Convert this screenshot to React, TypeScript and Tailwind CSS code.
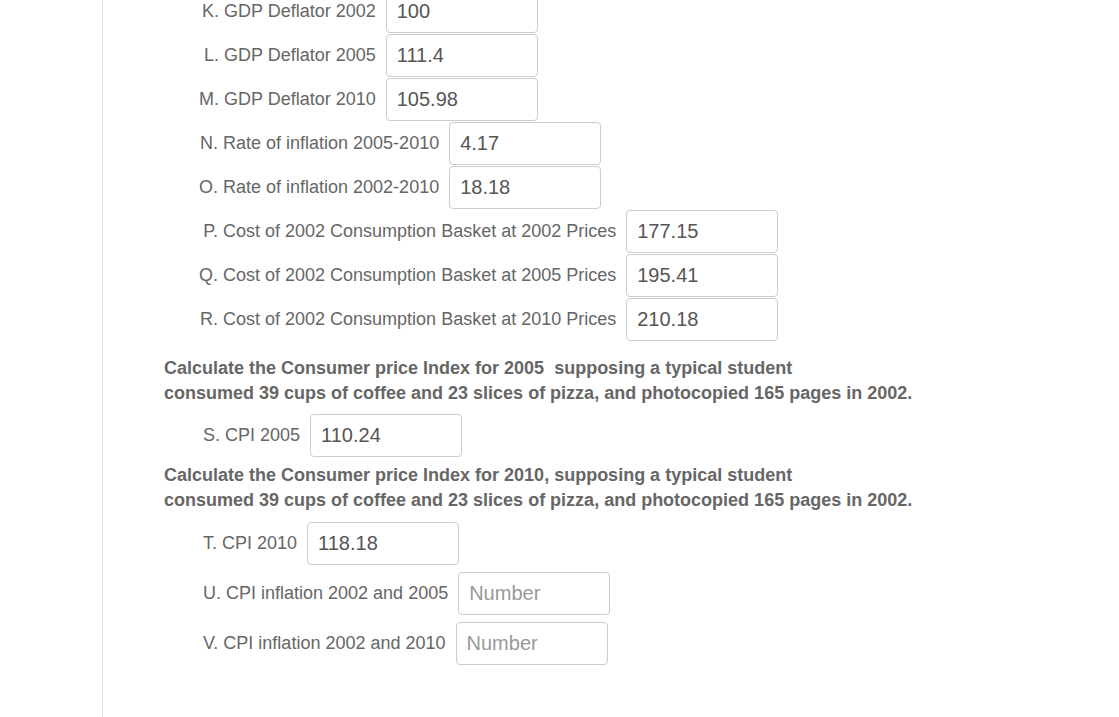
const Field = ({ value }: { value?: string }) => (
  <input
    type="text"
    readOnly
    value={value ?? ""}
    placeholder="Number"
    className="w-[152px] h-[43px] px-[10px] border border-[#ccc] rounded-[4px] bg-white text-[20px] text-[#555] placeholder:text-[#999] outline-none font-['Liberation_Sans',Arial,sans-serif]"
  />
);

type Row = { label: string; value?: string };

// rows that share a label column (labels right-aligned against their inputs)
const Group = ({ rows }: { rows: Row[] }) => (
  <div className="grid grid-cols-[auto_auto] justify-start items-center gap-x-[10px] gap-y-[1px] pl-[35px]">
    {rows.map((r) => [
      <label key={r.label + "l"} className="justify-self-end text-[#666]">{r.label}</label>,
      <Field key={r.label + "f"} value={r.value} />,
    ])}
  </div>
);

const Single = ({ label, value, className }: Row & { className?: string }) => (
  <div className={"flex items-center gap-[10px] pl-[39px] " + (className ?? "")}>
    <label className="text-[#666]">{label}</label>
    <Field value={value} />
  </div>
);

const App: React.FC = () => {
  return (
    <div className="w-[1119px] h-[717px] overflow-hidden bg-white font-['Liberation_Sans',Arial,sans-serif] text-[18px] leading-[25px]">
      <div className="ml-[102px] h-[760px] border-l border-[#ddd]">
        <div className="pl-[61px] -mt-[10px]">
          <div className="flex flex-col gap-y-[1px]">
            <Group
              rows={[
                { label: "K. GDP Deflator 2002", value: "100" },
                { label: "L. GDP Deflator 2005", value: "111.4" },
                { label: "M. GDP Deflator 2010", value: "105.98" },
              ]}
            />
            <Group
              rows={[
                { label: "N. Rate of inflation 2005-2010", value: "4.17" },
                { label: "O. Rate of inflation 2002-2010", value: "18.18" },
              ]}
            />
            <Group
              rows={[
                { label: "P. Cost of 2002 Consumption Basket at 2002 Prices", value: "177.15" },
                { label: "Q. Cost of 2002 Consumption Basket at 2005 Prices", value: "195.41" },
                { label: "R. Cost of 2002 Consumption Basket at 2010 Prices", value: "210.18" },
              ]}
            />
          </div>

          <p className="mt-[15px] font-bold text-[#666]">
            Calculate the Consumer price Index for 2005&nbsp; supposing a typical student
            <br />
            consumed 39 cups of coffee and 23 slices of pizza, and photocopied 165 pages in 2002.
          </p>
          <Single className="mt-[8px]" label="S. CPI 2005" value="110.24" />

          <p className="mt-[6px] font-bold text-[#666]">
            Calculate the Consumer price Index for 2010, supposing a typical student
            <br />
            consumed 39 cups of coffee and 23 slices of pizza, and photocopied 165 pages in 2002.
          </p>
          <Single className="mt-[9px]" label="T. CPI 2010" value="118.18" />
          <Single className="mt-[7px]" label="U. CPI inflation 2002 and 2005" />
          <Single className="mt-[7px]" label="V. CPI inflation 2002 and 2010" />
        </div>
      </div>
    </div>
  );
};

export default App;
